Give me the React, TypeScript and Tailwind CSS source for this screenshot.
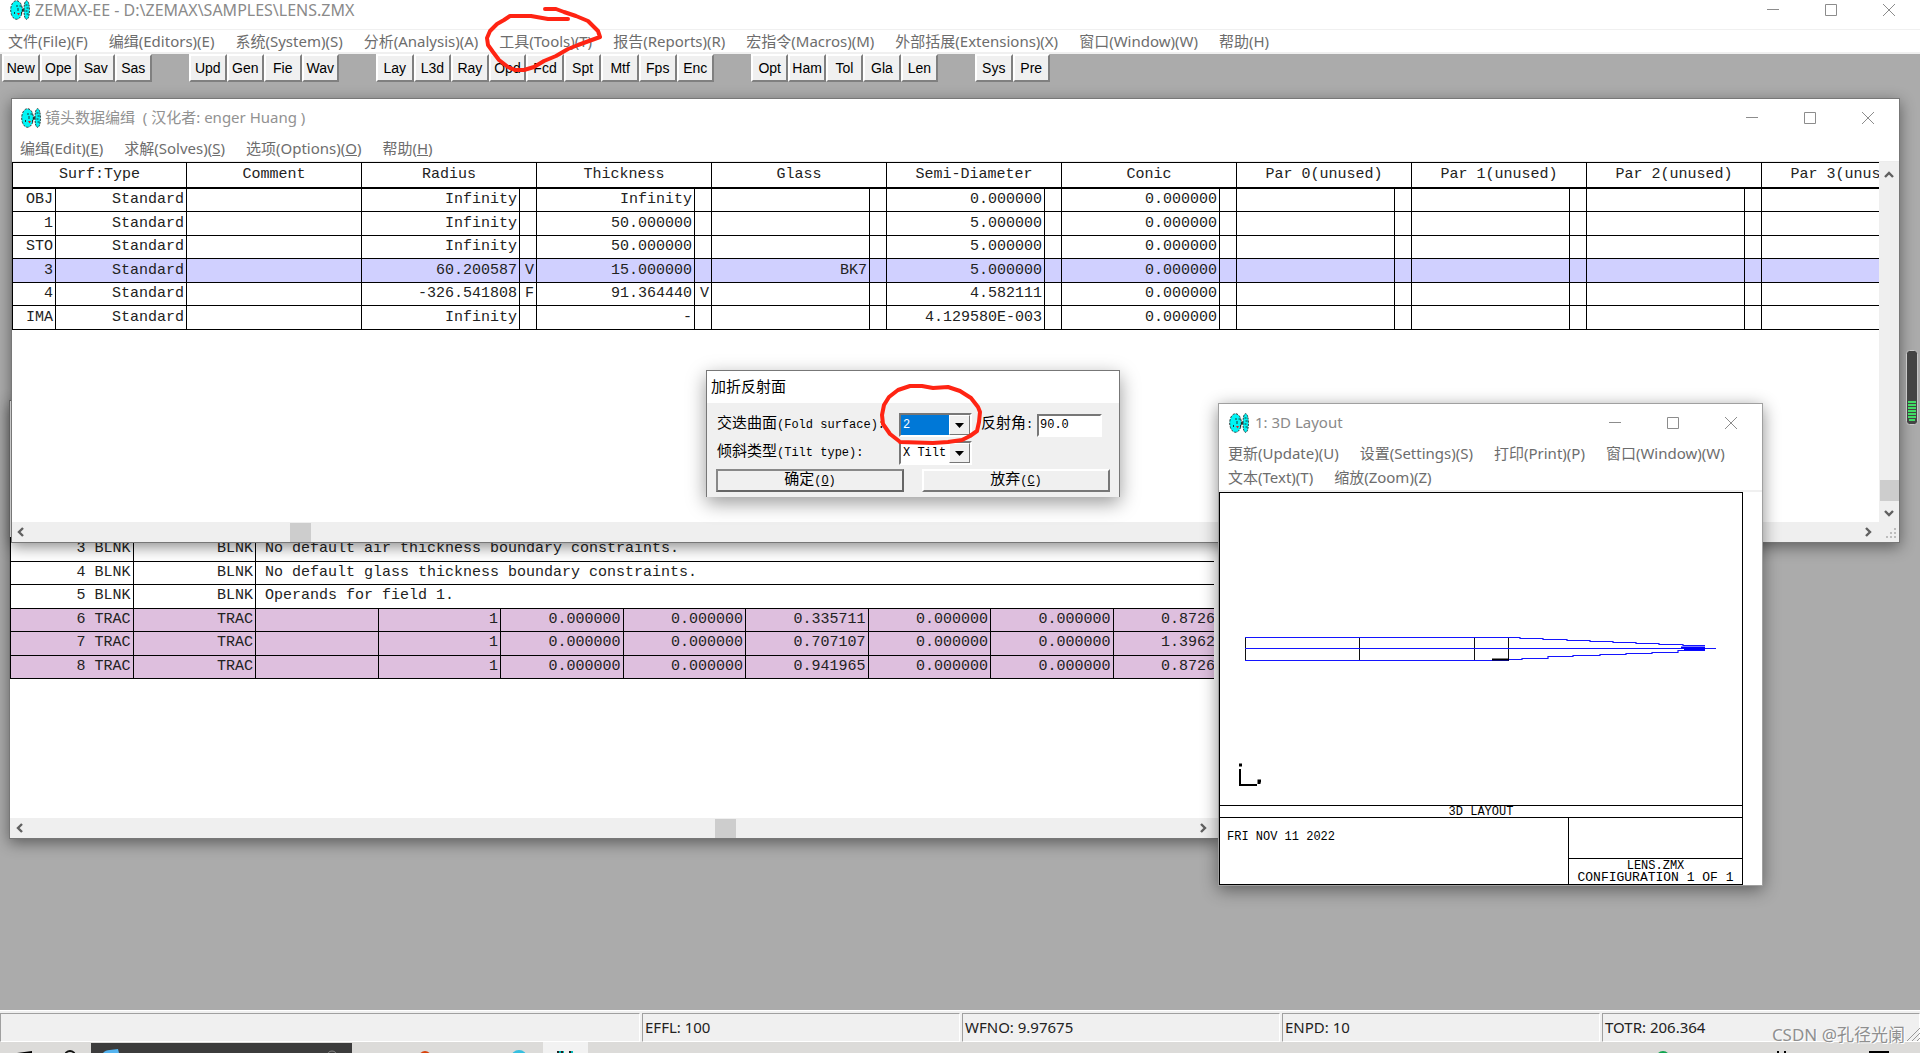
import React from 'react';

const mainMenu = [
  '文件(File)(F)',
  '编缉(Editors)(E)',
  '系统(System)(S)',
  '分析(Analysis)(A)',
  '工具(Tools)(T)',
  '报告(Reports)(R)',
  '宏指令(Macros)(M)',
  '外部括展(Extensions)(X)',
  '窗口(Window)(W)',
  '帮助(H)',
];

const toolGroups = [
  { width: 'w-[150px]', items: ['New', 'Ope', 'Sav', 'Sas'] },
  { width: 'w-[150px]', items: ['Upd', 'Gen', 'Fie', 'Wav'] },
  { width: 'w-[338px]', items: ['Lay', 'L3d', 'Ray', 'Opd', 'Fcd', 'Spt', 'Mtf', 'Fps', 'Enc'] },
  { width: 'w-[187px]', items: ['Opt', 'Ham', 'Tol', 'Gla', 'Len'] },
  { width: 'w-[75px]', items: ['Sys', 'Pre'] },
];

const editorMenu = [
  ['编缉(Edit)(', 'E'],
  ['求解(Solves)(', 'S'],
  ['选项(Options)(', 'O'],
  ['帮助(', 'H'],
];

const layoutMenu = [
  '更新(Update)(U)',
  '设置(Settings)(S)',
  '打印(Print)(P)',
  '窗口(Window)(W)',
  '文本(Text)(T)',
  '缩放(Zoom)(Z)',
];

const lensColumns = [
  'Radius',
  'Thickness',
  'Glass',
  'Semi-Diameter',
  'Conic',
  'Par 0(unused)',
  'Par 1(unused)',
  'Par 2(unused)',
  'Par 3(unused)',
];

type Cell = [string, string?];

const lensRows: { surf: string; active?: boolean; cells: Cell[] }[] = [
  { surf: 'OBJ', cells: [['Infinity'], ['Infinity'], [''], ['0.000000'], ['0.000000']] },
  { surf: '1', cells: [['Infinity'], ['50.000000'], [''], ['5.000000'], ['0.000000']] },
  { surf: 'STO', cells: [['Infinity'], ['50.000000'], [''], ['5.000000'], ['0.000000']] },
  { surf: '3', active: true, cells: [['60.200587', 'V'], ['15.000000'], ['BK7'], ['5.000000'], ['0.000000']] },
  { surf: '4', cells: [['-326.541808', 'F'], ['91.364440', 'V'], [''], ['4.582111'], ['0.000000']] },
  { surf: 'IMA', cells: [['Infinity'], ['-'], [''], ['4.129580E-003'], ['0.000000']] },
];

const blankOperands = [
  { id: 3, note: 'No default air thickness boundary constraints.' },
  { id: 4, note: 'No default glass thickness boundary constraints.' },
  { id: 5, note: 'Operands for field 1.' },
];

const traceOperands = [
  { id: 6, values: ['', '1', '0.000000', '0.000000', '0.335711', '0.000000', '0.000000', '0.872665'] },
  { id: 7, values: ['', '1', '0.000000', '0.000000', '0.707107', '0.000000', '0.000000', '1.396263'] },
  { id: 8, values: ['', '1', '0.000000', '0.000000', '0.941965', '0.000000', '0.000000', '0.872665'] },
];

const UI_FONT = "font-['Noto_Sans','Noto_Sans_CJK_SC',sans-serif]";
const MONO_FONT = "font-['Liberation_Mono','Noto_Sans_CJK_SC',monospace]";

const LensIcon: React.FC = () => (
  <svg width="20" height="20" viewBox="0 0 20 20" className="shrink-0" aria-hidden="true">
    <ellipse cx="6.5" cy="10" rx="5.8" ry="9.3" fill="#00f5f5" stroke="#222" strokeWidth=".9" strokeDasharray="2.4 1.2" />
    <path d="M14 10C14 5 14.8 .7 16.6 .7S19.4 5 19.4 10 18.5 19.3 16.6 19.3 14 15 14 10Z" fill="#00f5f5" stroke="#222" strokeWidth=".9" strokeDasharray="2 1" />
    <path d="M6 6h2M9.5 6h2M8 8v3M4.5 12v2M11.5 12v2M15.5 5h2M16.5 8h2M15.5 11h2M16.5 14h2" fill="none" stroke="#222" strokeWidth=".9" />
    <path d="M13 8.5v3" stroke="#111" strokeWidth="1.4" />
    <path d="M7 13h3l-1.5 2.4z" fill="#f01818" />
  </svg>
);

const WindowControls: React.FC = () => (
  <div className="flex pr-[2px] text-[#8c8c8c]">
    <button aria-label="Minimize" className="flex h-5 w-[58px] items-center justify-center">
      <svg width="12" height="12" viewBox="0 0 12 12" stroke="currentColor"><path d="M0 5.5h12" /></svg>
    </button>
    <button aria-label="Maximize" className="flex h-5 w-[58px] items-center justify-center">
      <svg width="12" height="12" viewBox="0 0 12 12" fill="none" stroke="currentColor"><path d="M.5.5h11v11H.5z" /></svg>
    </button>
    <button aria-label="Close" className="flex h-5 w-[58px] items-center justify-center">
      <svg width="12" height="12" viewBox="0 0 12 12" stroke="currentColor"><path d="M0 0l12 12M12 0L0 12" /></svg>
    </button>
  </div>
);

const Chevron: React.FC<{ d: string; label: string }> = ({ d, label }) => (
  <button aria-label={label} className="flex size-[18px] shrink-0 items-center justify-center">
    <svg width="10" height="10" viewBox="0 0 10 10" fill="none" stroke="#606060" strokeWidth="2.4">
      <path d={d} />
    </svg>
  </button>
);

const LEFT = 'M7 1L3 5l4 4';
const RIGHT = 'M3 1l4 4-4 4';
const UP = 'M1 7l4-4 4 4';
const DOWN = 'M1 3l4 4 4-4';

const LensEditor: React.FC = () => (
  <section className="absolute top-[44px] right-[20px] left-[11px] flex h-[445px] flex-col border border-[#777] bg-white shadow-[0_4px_14px_rgba(0,0,0,0.45)]">
    <header className="flex h-[37px] items-center gap-1 pl-[9px] text-[#929292]">
      <LensIcon />
      <h2 className="flex-1 text-[15px] whitespace-pre">镜头数据编缉{'  '}( 汉化者: enger Huang )</h2>
      <WindowControls />
    </header>
    <nav className="flex h-[26px] items-center gap-[21px] border-b border-[#ececec] pl-2 text-[15px] text-[#6d6d6d]">
      {editorMenu.map(([text, key]) => (
        <button key={key}>
          {text}
          <u>{key}</u>)
        </button>
      ))}
    </nav>
    <div className="flex min-h-0 flex-1">
      <div className="min-w-0 flex-1 overflow-hidden">
        <table className={`h-[168px] w-[1924px] table-fixed border-collapse text-[15px] leading-4 text-[#222] ${MONO_FONT}`}>
          <colgroup>
            <col className="w-[43px]" />
            <col className="w-[131px]" />
            <col className="w-[175px]" />
            {lensColumns.map((name) => (
              <React.Fragment key={name}>
                <col className="w-[158px]" />
                <col className="w-[17px]" />
              </React.Fragment>
            ))}
          </colgroup>
          <thead>
            <tr className="h-[25px] border-t border-b-2 border-black">
              <th colSpan={2} className="border-x border-black p-0 font-normal">Surf:Type</th>
              <th className="border-x border-black p-0 font-normal">Comment</th>
              {lensColumns.map((name) => (
                <th key={name} colSpan={2} className="border-x border-black p-0 font-normal">{name}</th>
              ))}
            </tr>
          </thead>
          <tbody>
            {lensRows.map((row) => (
              <tr key={row.surf} className={row.active ? 'bg-[#d0d0ff]' : 'bg-white'}>
                <td className="border border-black p-0 pr-[2px] text-right">{row.surf}</td>
                <td className="border border-black p-0 pr-[2px] text-right">Standard</td>
                <td className="border border-black p-0" />
                {lensColumns.map((name, i) => (
                  <React.Fragment key={name}>
                    <td className="border border-black p-0 pr-[2px] text-right">{row.cells[i]?.[0]}</td>
                    <td className="border border-black p-0 pr-[2px] text-right">{row.cells[i]?.[1]}</td>
                  </React.Fragment>
                ))}
              </tr>
            ))}
          </tbody>
        </table>
      </div>
      <div className="flex w-[20px] flex-col items-center bg-[#efefef] pt-1">
        <Chevron d={UP} label="Scroll up" />
        <div className="flex-1" />
        <div className="mb-[3px] h-[21px] w-[19px] bg-[#cdcdcd]" />
        <Chevron d={DOWN} label="Scroll down" />
      </div>
    </div>
    <div className="flex h-[20px] items-center bg-[#efefef]">
      <Chevron d={LEFT} label="Scroll left" />
      <div className="flex-1 pl-[260px]">
        <div className="h-[19px] w-[21px] bg-[#cdcdcd]" />
      </div>
      <Chevron d={RIGHT} label="Scroll right" />
      <svg width="22" height="16" viewBox="0 0 22 16" fill="#bdbdbd" aria-hidden="true">
        <path d="M17 4h2v2h-2zM13 8h2v2h-2zM17 8h2v2h-2zM9 12h2v2H9zM13 12h2v2h-2zM17 12h2v2h-2z" />
      </svg>
    </div>
  </section>
);

const MeritEditor: React.FC = () => (
  <section className="absolute top-[346px] left-[9px] flex h-[439px] w-[1212px] flex-col border border-[#777] bg-white shadow-[0_4px_14px_rgba(0,0,0,0.45)]">
    <div className="mr-[6px] flex-1 overflow-hidden pt-[136px]">
      <table className={`h-[142px] w-[1226px] table-fixed border-collapse text-[15px] leading-4 text-[#222] ${MONO_FONT}`}>
        <tbody>
          {blankOperands.map((op) => (
            <tr key={op.id}>
              <td className="border border-black p-0 pr-[2px] text-right">{op.id} BLNK</td>
              <td className="border border-black p-0 pr-[2px] text-right">BLNK</td>
              <td colSpan={8} className="border border-black p-0 pl-[9px]">{op.note}</td>
            </tr>
          ))}
          {traceOperands.map((op) => (
            <tr key={op.id} className="bg-[#debfde]">
              <td className="border border-black p-0 pr-[2px] text-right">{op.id} TRAC</td>
              <td className="border border-black p-0 pr-[2px] text-right">TRAC</td>
              {op.values.map((value, i) => (
                <td key={i} className="border border-black p-0 pr-[2px] text-right">{value}</td>
              ))}
            </tr>
          ))}
        </tbody>
      </table>
    </div>
    <div className="flex h-[20px] items-center bg-[#efefef] pr-[8px] pl-px">
      <Chevron d={LEFT} label="Scroll left" />
      <div className="flex-1 pl-[686px]">
        <div className="h-[19px] w-[21px] bg-[#cdcdcd]" />
      </div>
      <Chevron d={RIGHT} label="Scroll right" />
    </div>
  </section>
);

const LensDrawing: React.FC = () => (
  <svg width="520" height="312" viewBox="0 0 520 312" fill="none" aria-label="Lens drawing">
    <path d="M25.5 145v23M139.5 145v23M254.5 145v23M288.5 145v23" stroke="#111" />
    <path
      d="M25 144.5h275v1h23v1h24v1h23v1h23v1h23v1h23v1h24v1h22M25 155.5h471M25 167.5h263v-1h14v-1h26v-2h25v-1h27v-1h26v-1h26v-1h26v-2h27"
      stroke="#1414ff"
      strokeWidth="1.2"
    />
    <path d="M461 154.5h23v2h-20" stroke="#0000ff" strokeWidth="2" />
    <path d="M272 166.5h17" stroke="#000" strokeWidth="2" />
    <path d="M20 276v16h17" stroke="#000" strokeWidth="2" />
    <path d="M19 272h3M39 291v-3h2" stroke="#000" strokeWidth="3" />
  </svg>
);

const LayoutWindow: React.FC = () => (
  <section className="absolute top-[349px] left-[1218px] flex w-[545px] flex-col border border-[#a0a0a0] bg-white shadow-[0_4px_16px_rgba(0,0,0,0.45)]">
    <header className="flex h-[37px] items-center gap-[6px] pl-[10px] text-[#8a8a8a]">
      <LensIcon />
      <h2 className="flex-1 text-[15px]">1: 3D Layout</h2>
      <WindowControls />
    </header>
    <nav className="flex flex-wrap gap-x-[21px] border-b-2 border-[#f0f0f0] px-[9px] pb-px text-[15px] leading-6 text-[#6d6d6d]">
      {layoutMenu.map((item) => (
        <button key={item}>{item}</button>
      ))}
    </nav>
    <div className={`mr-[19px] border border-black text-[12px] leading-[11px] text-black ${MONO_FONT}`}>
      <LensDrawing />
      <p className="border-y border-black pt-[2px] text-center leading-[9px]">3D LAYOUT</p>
      <div className="flex h-[66px]">
        <p className="flex-1 pt-[14px] pl-[7px]">FRI NOV 11 2022</p>
        <div className="flex w-[174px] flex-col border-l border-black text-center">
          <div className="flex-1 border-b border-black" />
          <p className="pt-[2px]">LENS.ZMX</p>
          <p className="text-[13px] leading-[12px] whitespace-nowrap">CONFIGURATION 1 OF 1</p>
        </div>
      </div>
    </div>
  </section>
);

const DropArrow: React.FC = () => (
  <span className="pointer-events-none flex w-[21px] items-center justify-center border border-t-white border-r-[#777] border-b-[#777] border-l-white bg-[#f0f0f0]">
    <svg width="9" height="5" viewBox="0 0 9 5"><path d="M0 0h9L4.5 5z" fill="#000" /></svg>
  </span>
);

const FoldMirrorDialog: React.FC = () => (
  <section role="dialog" aria-label="加折反射面" className={`absolute top-[316px] left-[706px] flex w-[414px] flex-col border border-b-0 border-[#777] bg-[#f0f0f0] text-[12px] text-black shadow-[0_6px_18px_rgba(0,0,0,0.4)] ${MONO_FONT}`}>
    <h2 className={`flex h-[32px] items-center bg-white pb-[2px] pl-1 text-[15px] ${UI_FONT}`}>加折反射面</h2>
    <div className="grid grid-cols-[182px_73px_auto] gap-y-1 px-[10px] pt-[10px]">
      <label htmlFor="fold-surface" className="flex items-center"><span className="text-[15px]">交迭曲面</span>(Fold surface):</label>
      <div className="flex h-[24px] border-2 border-t-[#777] border-r-white border-b-white border-l-[#777] bg-white">
        <select id="fold-surface" defaultValue="2" className="min-w-0 flex-1 appearance-none bg-[#0078d7] pl-[2px] text-white">
          <option>2</option>
        </select>
        <DropArrow />
      </div>
      <div className="flex items-center pl-[9px]">
        <label htmlFor="angle" className="w-[56px] whitespace-nowrap"><span className="text-[15px]">反射角</span>:</label>
        <input id="angle" defaultValue="90.0" className="h-[23px] w-[65px] border-2 border-t-[#777] border-r-white border-b-white border-l-[#777] bg-white pl-[1px]" />
      </div>
      <label htmlFor="tilt-type" className="flex items-center"><span className="text-[15px]">倾斜类型</span>(Tilt type):</label>
      <div className="flex h-[24px] border-2 border-t-[#777] border-r-white border-b-white border-l-[#777] bg-white">
        <select id="tilt-type" defaultValue="X Tilt" className="min-w-0 flex-1 appearance-none bg-white pl-[2px]">
          <option>X Tilt</option>
        </select>
        <DropArrow />
      </div>
    </div>
    <div className="flex justify-between px-[9px] pt-[4px] pb-[5px]">
      <button className="h-[23px] w-[188px] border-2 border-t-[#888] border-r-[#666] border-b-[#666] border-l-[#888] leading-none">
        <span className="text-[15px]">确定</span>(<u>O</u>)
      </button>
      <button className="h-[23px] w-[188px] border-2 border-t-white border-r-[#777] border-b-[#777] border-l-white leading-none">
        <span className="text-[15px]">放弃</span>(<u>C</u>)
      </button>
    </div>
  </section>
);

const BatteryGauge: React.FC = () => (
  <svg width="12" height="75" viewBox="0 0 12 75" className="absolute top-[296px] right-[2px]" aria-hidden="true">
    <rect x=".5" y=".5" width="11" height="74" rx="3" fill="#444" stroke="#c8c8c8" />
    <path d="M2 52h8M2 55h8M2 58h8M2 61h8M2 64h8M2 67h8M3 70h6" stroke="#41dc64" strokeWidth="2" />
  </svg>
);

const Annotations: React.FC = () => (
  <svg className="pointer-events-none absolute top-0 left-0 h-[500px] w-[1100px]" viewBox="0 0 1100 500" fill="none" stroke="#ff2413" strokeWidth="4" strokeLinecap="round" strokeLinejoin="round" aria-hidden="true">
    <path d="M545 9L556 9 564 12 576 16 588 21 594 27 598 31 600 37 589 41 578 45 568 49 556 56 544 61 534 67 524 70 515 70 508 67 499 60 493 52 488 45 487 38 490 31 497 24 504 20 510 16 531 16 548 19 568 19" />
    <path d="M899 441L890 434 883 424 882 415 884 405 889 397 898 390 910 386 922 386 933 388 948 387 960 391 971 398 978 407 980 412 979 422 977 431 970 436 962 440 948 442 933 443 900 442" />
  </svg>
);

const StatusBar: React.FC = () => (
  <footer className="grid h-[32px] grid-cols-[2fr_1fr_1fr_1fr_1fr] border-t border-white bg-[#f0f0f0] pt-[2px] text-[15px] text-[#222]">
    {['', 'EFFL: 100', 'WFNO: 9.97675', 'ENPD: 10', 'TOTR: 206.364'].map((text) => (
      <div key={text} className="flex items-center border border-t-[#a0a0a0] border-r-white border-b-white border-l-[#a0a0a0] pl-[2px] not-first:ml-[2px]">
        {text}
      </div>
    ))}
  </footer>
);

const Taskbar: React.FC = () => (
  <div className="relative h-[11px] overflow-hidden bg-[#dcdbd9]">
    <svg className="block h-[11px] w-[600px]" viewBox="0 0 600 11" aria-hidden="true">
      <rect x="91" y="1" width="261" height="10" fill="#3c3c3c" />
      <rect x="543" width="45" height="11" fill="#f2f2f2" />
      <path d="M17 11l15-2v2z" fill="#000" />
      <circle cx="70" cy="14" r="5" fill="none" stroke="#111" strokeWidth="2" />
      <path d="M103 11c3-4 10-3 15-4l1 4z" fill="#55b4f0" />
      <circle cx="332" cy="14" r="5" fill="none" stroke="#888" />
      <circle cx="425" cy="15" r="6" fill="#d8420c" />
      <circle cx="519" cy="16" r="8" fill="#35bfe0" />
      <path d="M557 10h7M569 10h4" stroke="#0bb" strokeWidth="2" />
      <path d="M557 10h7M569 10h4" stroke="#222" strokeWidth="2" strokeDasharray="2 2" />
    </svg>
    <svg className="absolute top-0 right-0 h-[11px] w-[300px]" viewBox="0 0 300 11" aria-hidden="true">
      <circle cx="43" cy="16" r="7" fill="#12a550" />
      <path d="M157 9h2v2h-2zM164 9h2v2h-2zM249 9h20v2h-20z" fill="#000" />
    </svg>
  </div>
);

const App: React.FC = () => {
  return (
    <div className={`relative flex h-screen flex-col overflow-hidden bg-[#ababab] ${UI_FONT}`}>
      <header className="flex h-[29px] items-start gap-[5px] bg-white pl-[10px] text-[#8a8a8a]">
        <LensIcon />
        <h1 className="flex-1 text-[16px] leading-[21px]">ZEMAX-EE - D:\ZEMAX\SAMPLES\LENS.ZMX</h1>
        <WindowControls />
      </header>
      <nav className="flex h-[25px] items-center gap-[21px] border-t border-b-2 border-t-[#f0f0f0] border-b-[#f0f0f0] bg-white pl-2 text-[15px] text-[#6d6d6d]">
        {mainMenu.map((item) => (
          <button key={item} className="whitespace-nowrap">{item}</button>
        ))}
      </nav>
      <main className="relative min-h-0 flex-1">
        <div className="flex h-[28px] gap-[37px] pl-[2px] font-['Liberation_Sans',sans-serif] text-[14px] text-black">
          {toolGroups.map((group) => (
            <div key={group.items[0]} className={`${group.width} flex`}>
              {group.items.map((item) => (
                <button key={item} className="min-w-0 flex-1 border-2 border-t-white border-r-[#808080] border-b-[#808080] border-l-white bg-[#f0f0f0]">
                  {item}
                </button>
              ))}
            </div>
          ))}
        </div>
        <MeritEditor />
        <LensEditor />
        <LayoutWindow />
        <FoldMirrorDialog />
        <BatteryGauge />
      </main>
      <StatusBar />
      <Taskbar />
      <Annotations />
      <p className="absolute right-[15px] bottom-[6px] text-[17px] leading-6 text-[#8f8f8f] [text-shadow:1px_1px_0_#fff]">CSDN @孔径光阑</p>
      <svg className="absolute right-0 bottom-[12px]" width="14" height="14" viewBox="0 0 14 14" stroke="#999" aria-hidden="true">
        <path d="M1 14L14 1M6 14l8-8M11 14l3-3" />
      </svg>
    </div>
  );
};

export default App;
